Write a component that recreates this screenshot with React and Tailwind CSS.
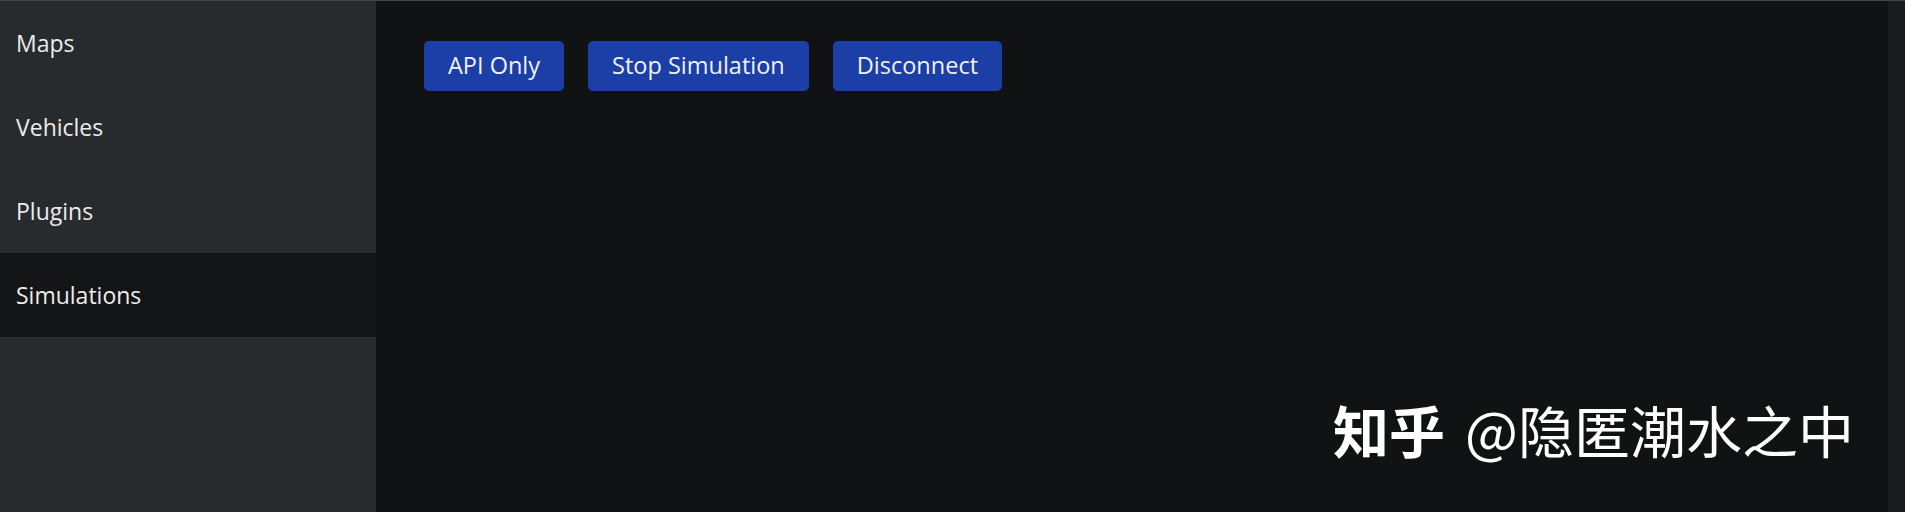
import React from "react";

const navItems = ["Maps", "Vehicles", "Plugins", "Simulations"];

const Sidebar = ({ active }) => (
  <div className="w-[376px] shrink-0 bg-[#282b2e]">
    {navItems.map((item) => (
      <div
        key={item}
        className={
          "h-[84px] flex items-center pl-4 text-[23px] text-[#ececec] " +
          (item === active ? "bg-[#141517]" : "")
        }
      >
        {item}
      </div>
    ))}
  </div>
);

const buttons = ["API Only", "Stop Simulation", "Disconnect"];

const App = () => {
  return (
    <div
      className="relative h-[512px] w-full flex flex-col bg-[#111214] overflow-hidden"
      style={{ fontFamily: '"Open Sans", "Noto Sans", sans-serif' }}
    >
      <div className="h-px bg-[#44474a]" />
      <div className="flex flex-1">
        <Sidebar active="Simulations" />
        <div className="flex-1 pl-[48px] pt-10">
          <div className="flex gap-6">
            {buttons.map((b) => (
              <button
                key={b}
                className="h-[50px] px-6 rounded-[5px] bg-[#1b3ea7] text-[23.5px] text-[#f0f2f8]"
              >
                {b}
              </button>
            ))}
          </div>
        </div>
        <div className="w-[17px] shrink-0 bg-[#191b1c]" />
      </div>
      {/* watermark */}
      <div
        className="absolute left-[1333px] top-[401px] flex items-center text-[56px] text-white leading-none"
        style={{ fontFamily: '"Noto Sans CJK SC", sans-serif' }}
      >
        <span className="font-semibold">知乎</span>
        <span className="ml-[20px]">@隐匿潮水之中</span>
      </div>
    </div>
  );
};

export default App;
